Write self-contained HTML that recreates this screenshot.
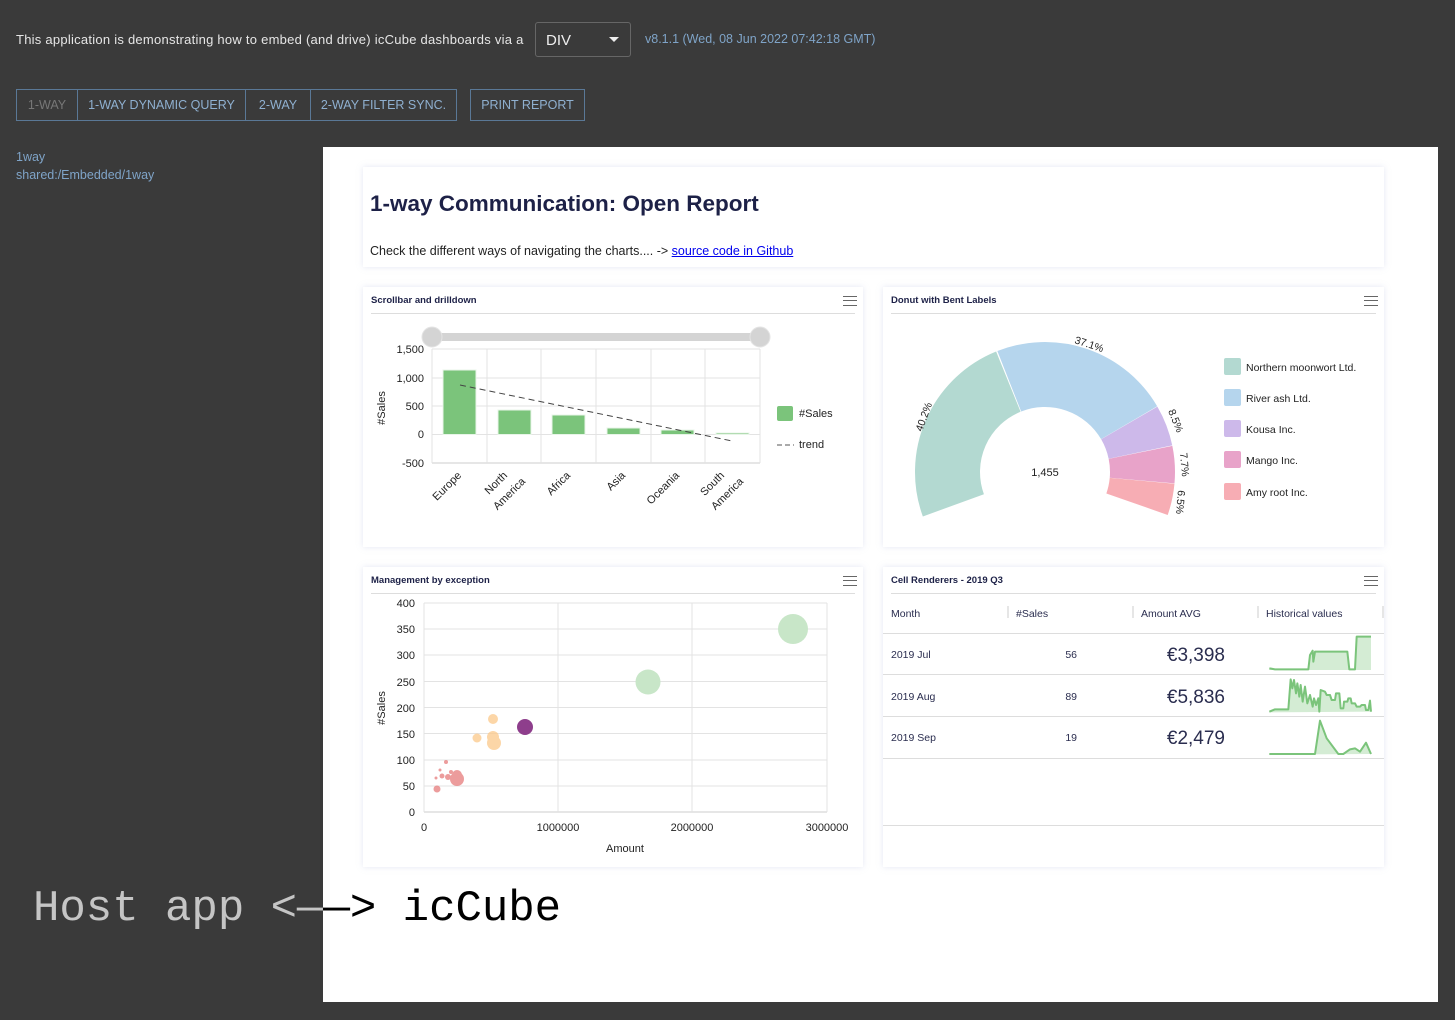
<!DOCTYPE html>
<html><head><meta charset="utf-8"><style>
*{margin:0;padding:0;box-sizing:border-box}
body{width:1455px;height:1020px;background:#3a3a3a;font-family:"Liberation Sans",sans-serif;position:relative;overflow:hidden}
.abs{position:absolute}
.top{left:16px;top:32px;color:#e6e6e6;font-size:13px;letter-spacing:0.25px}
.sel{left:535px;top:22px;width:96px;height:35px;border:1px solid #666;border-radius:3px;color:#eee;font-size:15px;padding:9px 10px}
.ver{left:645px;top:32px;color:#7fa4c8;font-size:12.5px}
.btn{top:89px;height:32px;border:1px solid #5a7896;color:#8fb0d0;font-size:12.5px;line-height:30px;text-align:center}
.side{left:16px;color:#7fa4c8;font-size:12.5px}
.panel{left:323px;top:147px;width:1115px;height:855px;background:#fff}
.card{background:#fff;box-shadow:0 0 6px rgba(180,185,220,0.35)}
.wt{font-size:9.5px;font-weight:bold;color:#1d2147;left:8px;top:8px}
.wl{left:8px;right:8px;top:26px;border-top:1px solid #ddd}
.ham{right:6px;top:9px;width:14px;height:10px;border-top:1.5px solid #666;border-bottom:1.5px solid #666}
.ham:after{content:"";position:absolute;left:0;right:0;top:3px;border-top:1.5px solid #666}
.host{left:33px;top:884px;font-family:"Liberation Mono",monospace;font-size:44px;color:#fff;mix-blend-mode:difference;white-space:pre}
svg text{font-family:"Liberation Sans",sans-serif}
</style></head><body>
<div class="abs top">This application is demonstrating how to embed (and drive) icCube dashboards via a</div>
<div class="abs sel">DIV<span style="position:absolute;right:11px;top:14px;width:0;height:0;border-left:5px solid transparent;border-right:5px solid transparent;border-top:5px solid #eee"></span></div>
<div class="abs ver">v8.1.1 (Wed, 08 Jun 2022 07:42:18 GMT)</div>
<div class="abs btn" style="left:16px;width:62px;color:#777">1-WAY</div>
<div class="abs btn" style="left:78px;width:168px;border-left:none">1-WAY DYNAMIC QUERY</div>
<div class="abs btn" style="left:246px;width:65px;border-left:none">2-WAY</div>
<div class="abs btn" style="left:311px;width:146px;border-left:none">2-WAY FILTER SYNC.</div>
<div class="abs btn" style="left:470px;width:115px">PRINT REPORT</div>
<div class="abs side" style="top:150px">1way</div>
<div class="abs side" style="top:168px">shared:/Embedded/1way</div>
<div class="abs panel"></div>
<div class="abs card" style="left:363px;top:167px;width:1021px;height:100px">
<div class="abs" style="left:7px;top:24px;font-size:22.5px;font-weight:bold;color:#1d2147">1-way Communication: Open Report</div>
<div class="abs" style="left:7px;top:77px;font-size:12.5px;color:#222">Check the different ways of navigating the charts.... -&gt; <span style="color:#00e;text-decoration:underline">source code in Github</span></div>
</div>
<div class="abs card" style="left:363px;top:287px;width:500px;height:260px"><div class="abs wt">Scrollbar and drilldown</div><div class="abs wl"></div><div class="abs ham"></div></div>
<div class="abs card" style="left:883px;top:287px;width:501px;height:260px"><div class="abs wt">Donut with Bent Labels</div><div class="abs wl"></div><div class="abs ham"></div></div>
<div class="abs card" style="left:363px;top:567px;width:500px;height:300px"><div class="abs wt">Management by exception</div><div class="abs wl"></div><div class="abs ham"></div></div>
<div class="abs card" style="left:883px;top:567px;width:501px;height:300px"><div class="abs wt">Cell Renderers - 2019 Q3</div><div class="abs wl"></div><div class="abs ham"></div></div>

<svg class="abs" style="left:0;top:0" width="1455" height="1020" viewBox="0 0 1455 1020">
<g stroke="#e3e3e3" stroke-width="1">
<line x1="432" y1="349" x2="760" y2="349"/><line x1="432" y1="378" x2="760" y2="378"/><line x1="432" y1="406" x2="760" y2="406"/><line x1="432" y1="434.5" x2="760" y2="434.5"/><line x1="432" y1="463" x2="760" y2="463" stroke="#ccc"/>
<line x1="432" y1="349" x2="432" y2="463"/><line x1="487" y1="349" x2="487" y2="463"/><line x1="541" y1="349" x2="541" y2="463"/><line x1="596" y1="349" x2="596" y2="463"/><line x1="651" y1="349" x2="651" y2="463"/><line x1="705" y1="349" x2="705" y2="463"/><line x1="760" y1="349" x2="760" y2="463"/>
</g>
<rect x="427" y="333" width="338" height="8" rx="4" fill="#d4d4d4"/>
<circle cx="432" cy="337" r="10" fill="#d4d4d4" stroke="#e4e4e4"/><circle cx="760" cy="337" r="10" fill="#d4d4d4" stroke="#e4e4e4"/>
<g fill="#7bc47b" stroke="#e8f5e8" stroke-width="1">
<rect x="443" y="370" width="33" height="64.5"/><rect x="498" y="410" width="33" height="24.5"/><rect x="552" y="415" width="33" height="19.5"/><rect x="607" y="428" width="33" height="6.5"/><rect x="661" y="430" width="33" height="4.5"/><rect x="716" y="433" width="33" height="1.5"/>
</g>
<line x1="460" y1="385" x2="732" y2="441" stroke="#444" stroke-dasharray="6,4" stroke-width="1"/>
<g font-size="11" fill="#222" text-anchor="end"><text x="424" y="353">1,500</text><text x="424" y="382">1,000</text><text x="424" y="410">500</text><text x="424" y="438">0</text><text x="424" y="467">-500</text></g>
<text transform="translate(385,408) rotate(-90)" font-size="11" fill="#222" text-anchor="middle">#Sales</text>
<g font-size="11" fill="#222" text-anchor="end">
<text transform="translate(462,476) rotate(-45)">Europe</text>
<text transform="translate(508,476) rotate(-45)">North</text><text transform="translate(526,482) rotate(-45)">America</text>
<text transform="translate(571,476) rotate(-45)">Africa</text>
<text transform="translate(626,476) rotate(-45)">Asia</text>
<text transform="translate(680,476) rotate(-45)">Oceania</text>
<text transform="translate(725,476) rotate(-45)">South</text><text transform="translate(744,482) rotate(-45)">America</text>
</g>
<rect x="777" y="406" width="16" height="15" rx="2" fill="#7bc47b"/><text x="799" y="417" font-size="11" fill="#222">#Sales</text>
<line x1="777" y1="445" x2="794" y2="445" stroke="#555" stroke-dasharray="5,3"/><text x="799" y="448" font-size="11" fill="#222">trend</text>
<g fill="none" stroke-width="65" transform="translate(1045,472)">
<circle r="97.5" stroke="#b3d9d1" stroke-dasharray="149.5 1000" transform="rotate(160)"/>
<circle r="97.5" stroke="#b5d5ed" stroke-dasharray="138 1000" transform="rotate(248.5)"/>
<circle r="97.5" stroke="#cdb9ea" stroke-dasharray="31.3 1000" transform="rotate(329.8)"/>
<circle r="97.5" stroke="#e8a3c9" stroke-dasharray="28.3 1000" transform="rotate(348.4)"/>
<circle r="97.5" stroke="#f7adb4" stroke-dasharray="24 1000" transform="rotate(365.2)"/>
</g>
<text x="1045" y="476" font-size="11" fill="#222" text-anchor="middle">1,455</text>
<g font-size="10.5" fill="#222">
<text transform="translate(922,432) rotate(-70)">40.2%</text>
<text transform="translate(1074,343) rotate(18)">37.1%</text>
<text transform="translate(1168,411) rotate(68)">8.5%</text>
<text transform="translate(1180,453) rotate(85)">7.7%</text>
<text transform="translate(1178,490) rotate(95)">6.5%</text>
</g>
<g font-size="10.5" fill="#222">
<rect x="1224" y="358" width="17" height="17" rx="2" fill="#b3d9d1"/><text x="1246" y="371">Northern moonwort Ltd.</text>
<rect x="1224" y="389" width="17" height="17" rx="2" fill="#b5d5ed"/><text x="1246" y="402">River ash Ltd.</text>
<rect x="1224" y="420" width="17" height="17" rx="2" fill="#cdb9ea"/><text x="1246" y="433">Kousa Inc.</text>
<rect x="1224" y="451" width="17" height="17" rx="2" fill="#e8a3c9"/><text x="1246" y="464">Mango Inc.</text>
<rect x="1224" y="483" width="17" height="17" rx="2" fill="#f7adb4"/><text x="1246" y="496">Amy root Inc.</text>
</g>
<g stroke="#e3e3e3">
<line x1="424" y1="603" x2="827" y2="603"/><line x1="424" y1="629" x2="827" y2="629"/><line x1="424" y1="655" x2="827" y2="655"/><line x1="424" y1="681.5" x2="827" y2="681.5"/><line x1="424" y1="707.5" x2="827" y2="707.5"/><line x1="424" y1="733.5" x2="827" y2="733.5"/><line x1="424" y1="760" x2="827" y2="760"/><line x1="424" y1="786" x2="827" y2="786"/><line x1="424" y1="812" x2="827" y2="812" stroke="#ccc"/>
<line x1="424" y1="603" x2="424" y2="812"/><line x1="558" y1="603" x2="558" y2="812"/><line x1="692" y1="603" x2="692" y2="812"/><line x1="827" y1="603" x2="827" y2="812"/>
</g>
<g font-size="11" fill="#222" text-anchor="end"><text x="415" y="607">400</text><text x="415" y="633">350</text><text x="415" y="659">300</text><text x="415" y="686">250</text><text x="415" y="712">200</text><text x="415" y="738">150</text><text x="415" y="764">100</text><text x="415" y="790">50</text><text x="415" y="816">0</text></g>
<g font-size="11" fill="#222" text-anchor="middle"><text x="424" y="831">0</text><text x="558" y="831">1000000</text><text x="692" y="831">2000000</text><text x="827" y="831">3000000</text><text x="625" y="852">Amount</text></g>
<text transform="translate(385,708) rotate(-90)" font-size="11" fill="#222" text-anchor="middle">#Sales</text>
<circle cx="793" cy="629" r="15" fill="#c8e6c8"/>
<circle cx="648" cy="682" r="12.5" fill="#c8e6c8"/>
<circle cx="525" cy="727" r="8" fill="#8e3e8c"/>
<g fill="#fcc98a" opacity="0.75"><circle cx="493" cy="719" r="5"/><circle cx="477" cy="738" r="4.5"/><circle cx="493" cy="737" r="6"/><circle cx="494" cy="743" r="7"/></g>
<g fill="#e57373" opacity="0.7"><circle cx="457" cy="779" r="7"/><circle cx="457" cy="775" r="5"/><circle cx="437" cy="789" r="3.5"/><circle cx="448" cy="777" r="3"/><circle cx="442" cy="776" r="2.5"/><circle cx="446" cy="762" r="2"/><circle cx="436" cy="778" r="1.5"/><circle cx="440" cy="770" r="1.5"/><circle cx="451" cy="772" r="2"/></g>
<g font-size="10.5" fill="#2a2d4f">
<text x="891" y="617">Month</text><text x="1016" y="617">#Sales</text><text x="1141" y="617">Amount AVG</text><text x="1266" y="617">Historical values</text>
<text x="891" y="658">2019 Jul</text><text x="891" y="700">2019 Aug</text><text x="891" y="741">2019 Sep</text>
<g text-anchor="end"><text x="1077" y="658">56</text><text x="1077" y="700">89</text><text x="1077" y="741">19</text></g>
<g text-anchor="end" font-size="19"><text x="1225" y="661">€3,398</text><text x="1225" y="703">€5,836</text><text x="1225" y="744">€2,479</text></g>
</g>
<g stroke="#ccc"><line x1="1008" y1="606" x2="1008" y2="618"/><line x1="1133" y1="606" x2="1133" y2="618"/><line x1="1258" y1="606" x2="1258" y2="618"/><line x1="1383" y1="606" x2="1383" y2="618"/></g>
<g stroke="#ddd"><line x1="883" y1="633.5" x2="1384" y2="633.5"/><line x1="883" y1="674.5" x2="1384" y2="674.5"/><line x1="883" y1="716.5" x2="1384" y2="716.5"/><line x1="883" y1="758.5" x2="1384" y2="758.5"/><line x1="883" y1="825.5" x2="1384" y2="825.5"/></g>
<g transform="translate(1260,630) scale(0.33333)" stroke="#7bc47b" stroke-width="6" fill="#d4ecd4" stroke-linejoin="round">
<path d="M28 120 L28 115 L45 118 L145 118 L150 75 L158 62 L160 95 L165 65 L262 65 L268 118 L285 118 L290 20 L333 20 L333 120 Z" stroke="none"/>
<path d="M28 115 L45 118 L145 118 L150 75 L158 62 L160 95 L165 65 L262 65 L268 118 L285 118 L290 20 L333 20" fill="none"/>
<path d="M28 247 L28 245 L45 238 L85 238 L92 148 L97 175 L102 150 L108 190 L112 160 L118 200 L122 165 L128 215 L135 170 L142 220 L150 195 L158 230 L162 205 L168 225 L175 205 L178 245 L182 180 L195 185 L200 195 L210 195 L215 210 L225 210 L228 190 L238 190 L242 235 L250 235 L252 215 L262 215 L265 205 L272 205 L275 220 L285 220 L290 230 L300 230 L305 225 L315 225 L318 240 L325 240 L330 212 L333 245 Z" stroke="none"/>
<path d="M28 245 L45 238 L85 238 L92 148 L97 175 L102 150 L108 190 L112 160 L118 200 L122 165 L128 215 L135 170 L142 220 L150 195 L158 230 L162 205 L168 225 L175 205 L178 245 L182 180 L195 185 L200 195 L210 195 L215 210 L225 210 L228 190 L238 190 L242 235 L250 235 L252 215 L262 215 L265 205 L272 205 L275 220 L285 220 L290 230 L300 230 L305 225 L315 225 L318 240 L325 240 L330 212 L333 245" fill="none"/>
<path d="M28 374 L28 372 L165 372 L180 272 L200 325 L235 372 L250 372 L270 358 L285 355 L300 365 L318 338 L333 372 Z" stroke="none"/>
<path d="M28 372 L165 372 L180 272 L200 325 L235 372 L250 372 L270 358 L285 355 L300 365 L318 338 L333 372" fill="none"/>
</g>
</svg>
<div class="abs host">Host app &lt;——&gt; icCube</div>
</body></html>
